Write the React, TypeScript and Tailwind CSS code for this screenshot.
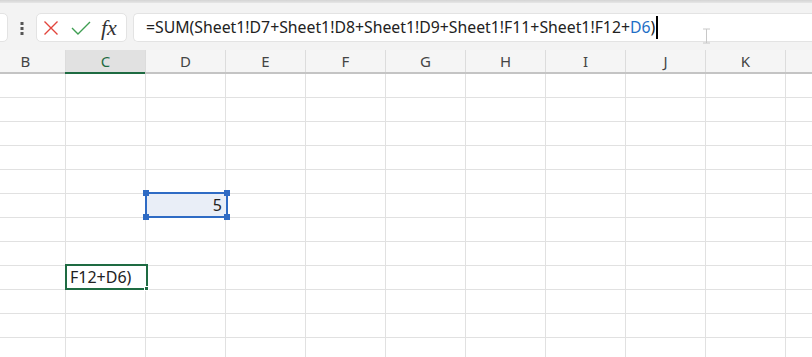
import React from 'react'

const cols = ['B', 'C', 'D', 'E', 'F', 'G', 'H', 'I', 'J', 'K', '']
const rows = Array.from({ length: 12 }, (_, i) => i)

export default function App() {
  return (
    <div
      className="relative h-[357px] w-[812px] overflow-hidden bg-white"
      style={{ fontFamily: '"Noto Sans", "Open Sans", sans-serif' }}
    >
      {/* formula bar */}
      <div className="h-[3px] bg-gradient-to-b from-[#d4d4d4] to-[#e6e6e6]" />
      <div className="flex h-[47px] items-start bg-[#f3f3f3] pt-[10px]">
        <div className="ml-[-20px] h-[29px] w-[28px] rounded-[5px] border border-[#e3e3e3] bg-white" />
        <div className="flex h-[29px] w-[28px] items-center justify-center text-[#555]">
          <svg width="4" height="14" viewBox="0 0 4 14">
            <rect x="0.5" y="1" width="3" height="3" fill="#555" />
            <rect x="0.5" y="6" width="3" height="3" fill="#555" />
            <rect x="0.5" y="11" width="3" height="3" fill="#555" />
          </svg>
        </div>
        <div className="flex h-[29px] w-[91px] items-center rounded-[5px] border border-[#e3e3e3] bg-white">
          <svg className="ml-[6px]" width="16" height="16" viewBox="0 0 16 16">
            <path d="M1.5 1.5 L14.5 14.5 M14.5 1.5 L1.5 14.5" stroke="#e2453c" strokeWidth="1.4" fill="none" />
          </svg>
          <svg className="ml-[12px]" width="20" height="16" viewBox="0 0 20 16">
            <path d="M1 8 L7 14 L19 2" stroke="#3f9e52" strokeWidth="1.4" fill="none" />
          </svg>
          <span
            className="ml-[10px] text-[22px] italic leading-none text-[#333]"
            style={{ fontFamily: '"Liberation Serif", "DejaVu Serif", serif' }}
          >
            fx
          </span>
        </div>
        <div className="ml-[6px] flex h-[29px] flex-1 items-center rounded-l-[5px] border border-r-0 border-[#e3e3e3] bg-white pl-[12px] text-[15.8px] text-[#222]">
          <span>=SUM(Sheet1!D7+Sheet1!D8+Sheet1!D9+Sheet1!F11+Sheet1!F12+</span>
          <span className="text-[#1f6fc6]">D6</span>
          <span>)</span>
          <span className="ml-[1px] h-[23px] w-[1.5px] bg-black" />
          <svg className="ml-[44px] mt-[16px]" width="9" height="16" viewBox="0 0 9 16">
            <path d="M1 1 H8 M4.5 1 V15 M1 15 H8" stroke="#c8c8c8" strokeWidth="1" fill="none" />
          </svg>
        </div>
      </div>

      {/* column headers */}
      <div className="ml-[-14px] flex h-[24px] border-b-2 border-[#c4c4c4] bg-[#f5f5f5] text-[15px] text-[#444]">
        {cols.map((c, i) => (
          <div
            key={i}
            className={
              c === 'C'
                ? 'relative flex w-[80px] shrink-0 items-center justify-center border-r border-[#dcdcdc] bg-[#e1e1e1] text-[#1e6b42]'
                : 'flex w-[80px] shrink-0 items-center justify-center border-r border-[#dcdcdc]'
            }
          >
            {c}
            {c === 'C' && <div className="absolute bottom-[-2px] left-[-1px] right-0 h-[2px] bg-[#1e6b42]" />}
          </div>
        ))}
      </div>

      {/* grid */}
      <div className="ml-[-14px]">
        {rows.map((r) => (
          <div key={r} className="flex h-[24px] border-b border-[#e1e1e1]">
            {cols.map((c, i) => (
              <div key={i} className="w-[80px] shrink-0 border-r border-[#e1e1e1]" />
            ))}
          </div>
        ))}
      </div>

      {/* selected range D6 */}
      <div className="absolute left-[145px] top-[192px] flex h-[26px] w-[83px] items-center justify-end border-2 border-[#2f6bc4] bg-[#e9eef7] pr-[4px] text-[16px] text-[#222]">
        5
        <span className="absolute left-[-4px] top-[-4px] h-[6px] w-[6px] bg-[#2f6bc4]" />
        <span className="absolute right-[-4px] top-[-4px] h-[6px] w-[6px] bg-[#2f6bc4]" />
        <span className="absolute bottom-[-4px] left-[-4px] h-[6px] w-[6px] bg-[#2f6bc4]" />
        <span className="absolute bottom-[-4px] right-[-4px] h-[6px] w-[6px] bg-[#2f6bc4]" />
      </div>

      {/* active editing cell C9 */}
      <div className="absolute left-[65px] top-[264px] flex h-[26px] w-[83px] items-center border-2 border-[#1e6b42] bg-white pl-[3px] text-[16px] text-[#222]">
        F12+D6)
        <span className="absolute bottom-[-3px] right-[-3px] h-[5px] w-[5px] border border-white bg-[#1e6b42]" />
      </div>
    </div>
  )
}
